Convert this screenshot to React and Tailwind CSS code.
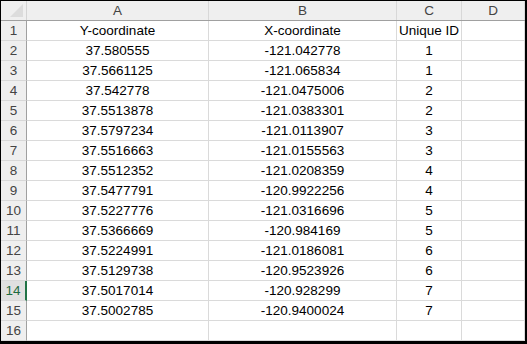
const rows = [
  ["Y-coordinate", "X-coordinate", "Unique ID"],
  ["37.580555", "-121.042778", "1"],
  ["37.5661125", "-121.065834", "1"],
  ["37.542778", "-121.0475006", "2"],
  ["37.5513878", "-121.0383301", "2"],
  ["37.5797234", "-121.0113907", "3"],
  ["37.5516663", "-121.0155563", "3"],
  ["37.5512352", "-121.0208359", "4"],
  ["37.5477791", "-120.9922256", "4"],
  ["37.5227776", "-121.0316696", "5"],
  ["37.5366669", "-120.984169", "5"],
  ["37.5224991", "-121.0186081", "6"],
  ["37.5129738", "-120.9523926", "6"],
  ["37.5017014", "-120.928299", "7"],
  ["37.5002785", "-120.9400024", "7"],
  ["", "", ""],
];

const cols = [
  { letter: "A", w: "w-[182px]" },
  { letter: "B", w: "w-[188px]" },
  { letter: "C", w: "w-[65px]" },
  { letter: "D", w: "w-[63px]" },
];

export default function App() {
  return (
    <div className="w-[527px] h-[344px] bg-black pt-px pl-px pr-[2px] pb-[3px] font-['Liberation_Sans',Arial,sans-serif] text-[13.5px]">
      <div className="bg-white w-[524px] h-[340px] overflow-hidden flex flex-col">
        {/* column headers */}
        <div className="flex h-[20px] bg-[#efefef] border-b border-[#a0a0a0] text-[#444]">
          <div className="w-[26px] border-r border-[#d4d4d4] relative">
            <div className="absolute right-[3px] bottom-[3px] w-0 h-0 border-l-[13px] border-l-transparent border-b-[13px] border-b-[#dcdcdc]" />
          </div>
          {cols.map((c) => (
            <div key={c.letter} className={`${c.w} shrink-0 border-r border-[#d8d8d8] flex items-center justify-center leading-none`}>
              {c.letter}
            </div>
          ))}
        </div>

        {rows.map((r, i) => {
          const sel = i === 13;
          return (
            <div key={i} className="flex h-[20px] shrink-0">
              <div
                className={`w-[26px] shrink-0 flex items-center justify-center leading-none ${
                  sel
                    ? "bg-[#e0e0e0] text-[#1d6b40] border-r-2 border-[#217346]"
                    : "bg-[#efefef] text-[#444] border-r border-[#a0a0a0]"
                } border-b border-b-[#d8d8d8]`}
              >
                {i + 1}
              </div>
              {cols.map((c, j) => (
                <div
                  key={c.letter}
                  className={`${c.w} shrink-0 border-r border-b border-[#dadada] flex items-center justify-center leading-none text-black`}
                >
                  {j < 3 ? r[j] : ""}
                </div>
              ))}
            </div>
          );
        })}
      </div>
    </div>
  );
}
